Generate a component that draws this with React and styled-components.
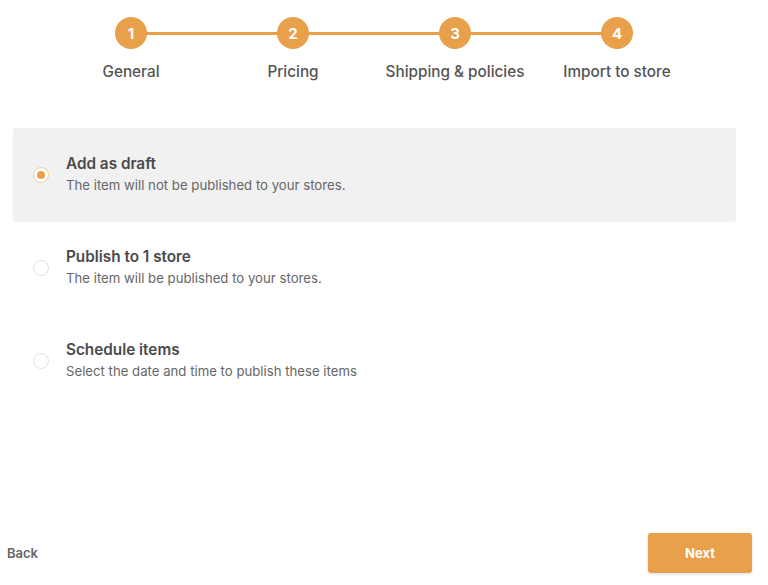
import React, { useState } from 'react'
import styled, { createGlobalStyle } from 'styled-components'

const GlobalStyle = createGlobalStyle`
  * { box-sizing: border-box; }
  html, body { margin: 0; padding: 0; background: #fff; }
  body {
    font-family: Inter, 'Noto Sans', sans-serif;
    color: #4a4a4a;
  }
`

const ORANGE = '#e8a04a'

const steps = ['General', 'Pricing', 'Shipping & policies', 'Import to store']

const options = [
  { id: 'draft', title: 'Add as draft', text: 'The item will not be published to your stores.' },
  { id: 'publish', title: 'Publish to 1 store', text: 'The item will be published to your stores.' },
  { id: 'schedule', title: 'Schedule items', text: 'Select the date and time to publish these items' },
]

const Page = styled.div`
  display: flex;
  flex-direction: column;
  min-height: 100vh;
`

const Stepper = styled.ol`
  display: grid;
  grid-template-columns: repeat(4, 162px);
  margin: 0;
  padding: 17px 0 0 50px;
  list-style: none;
`

const Step = styled.li`
  position: relative;
  display: flex;
  flex-direction: column;
  align-items: center;

  &::before {
    content: '';
    display: ${p => (p.$first ? 'none' : 'block')};
    position: absolute;
    top: 15px;
    left: -81px;
    width: 162px;
    height: 3px;
    background: ${ORANGE};
  }
`

const Circle = styled.span`
  position: relative;
  z-index: 1;
  display: flex;
  align-items: center;
  justify-content: center;
  width: 32px;
  height: 32px;
  border-radius: 50%;
  background: ${ORANGE};
  color: #fff;
  font-size: 15px;
  font-weight: 700;
`

const StepLabel = styled.span`
  margin-top: 13px;
  font-size: 15.3px;
  font-weight: 500;
  line-height: 20px;
  color: #555;
  white-space: nowrap;
`

const Options = styled.div`
  display: flex;
  flex-direction: column;
  margin: 46px 0 0 13px;
  width: 723px;
`

const Option = styled.label`
  display: flex;
  align-items: center;
  gap: 17px;
  height: 93px;
  padding: 0 20px;
  border-radius: 3px;
  cursor: pointer;
  background: ${p => (p.$active ? '#f1f1f1' : 'transparent')};
  box-shadow: ${p => (p.$active ? '0 1px 2px rgba(0,0,0,0.06)' : 'none')};
`

const Radio = styled.span`
  flex: none;
  display: flex;
  align-items: center;
  justify-content: center;
  width: 16px;
  height: 16px;
  border-radius: 50%;
  background: #fff;
  border: 1px solid ${p => (p.$checked ? '#f3cf9f' : '#e3e3e3')};

  &::after {
    content: '';
    display: ${p => (p.$checked ? 'block' : 'none')};
    width: 8px;
    height: 8px;
    border-radius: 50%;
    background: ${ORANGE};
  }
`

const OptionText = styled.div`
  display: flex;
  flex-direction: column;
  gap: 2px;
  margin-top: -2px;
`

const OptionTitle = styled.span`
  font-size: 15.3px;
  font-weight: 600;
  line-height: 20px;
  color: #4a4a4a;
`

const OptionDesc = styled.span`
  font-size: 13.2px;
  line-height: 18px;
  color: #666;
`

const Footer = styled.div`
  display: flex;
  align-items: center;
  justify-content: space-between;
  margin-top: auto;
  padding: 0 16px 12px 7px;
`

const BackButton = styled.button`
  border: none;
  background: none;
  padding: 0;
  font-family: inherit;
  font-size: 13px;
  font-weight: 600;
  color: #666;
  cursor: pointer;
`

const NextButton = styled.button`
  width: 104px;
  height: 40px;
  border: none;
  border-radius: 3px;
  background: ${ORANGE};
  box-shadow: 0 1px 3px rgba(0,0,0,0.12);
  color: #fff;
  font-family: inherit;
  font-size: 13px;
  font-weight: 700;
  cursor: pointer;
`

export default function App() {
  const [selected, setSelected] = useState('draft')

  return (
    <Page>
      <GlobalStyle />
      <Stepper>
        {steps.map((s, i) => (
          <Step key={s} $first={i === 0}>
            <Circle>{i + 1}</Circle>
            <StepLabel>{s}</StepLabel>
          </Step>
        ))}
      </Stepper>

      <Options>
        {options.map(o => (
          <Option key={o.id} $active={selected === o.id} onClick={() => setSelected(o.id)}>
            <Radio $checked={selected === o.id} />
            <OptionText>
              <OptionTitle>{o.title}</OptionTitle>
              <OptionDesc>{o.text}</OptionDesc>
            </OptionText>
          </Option>
        ))}
      </Options>

      <Footer>
        <BackButton>Back</BackButton>
        <NextButton>Next</NextButton>
      </Footer>
    </Page>
  )
}
